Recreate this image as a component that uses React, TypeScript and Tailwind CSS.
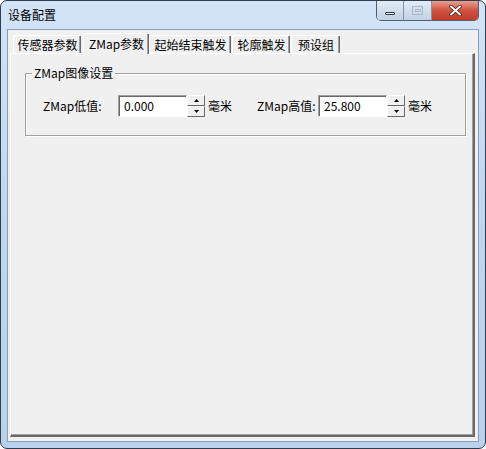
import type { ReactNode } from 'react';

const font = { fontFamily: '"Noto Sans CJK SC", "Microsoft YaHei", sans-serif' };

function Tab({ label, width, selected }: { label: string; width: string; selected?: boolean }) {
    if (selected) {
        return (
            <div
                className={`${width} relative z-10 -mb-px h-[21px] rounded-t-[2px] border-l border-t border-white bg-[#f0f0f0] flex items-start justify-center pt-[2px]`}
            >
                <div className="absolute right-0 top-0 bottom-0 w-[2px] border-r border-[#696969] bg-[#a0a0a0]" />
                <span className="text-[12px] leading-[16px] text-black">{label}</span>
            </div>
        );
    }
    return (
        <div
            className={`${width} relative h-[18px] rounded-t-[2px] border-l border-t border-white bg-[#f0f0f0] flex items-start justify-center pt-[1px]`}
        >
            <div className="absolute right-0 top-0 bottom-0 w-[2px] border-r border-[#696969] bg-[#a0a0a0]" />
            <span className="text-[12px] leading-[16px] text-black">{label}</span>
        </div>
    );
}

function SpinArrow({ up }: { up?: boolean }) {
    return (
        <div className="h-[11px] w-[18px] border-t border-l border-white border-r border-b border-r-[#696969] border-b-[#696969] bg-[#f0f0f0] flex items-center justify-center">
            <svg width="5" height="3" viewBox="0 0 5 3">
                {up ? <path d="M2.5 0 L5 3 L0 3 Z" fill="#000" /> : <path d="M0 0 L5 0 L2.5 3 Z" fill="#000" />}
            </svg>
        </div>
    );
}

function SpinField({ value }: { value: string }) {
    return (
        <div className="flex items-center">
            <div className="h-[22px] w-[69px] border-t border-l border-[#a0a0a0] border-b border-r border-b-white border-r-white">
                <div className="h-full w-full border-t border-l border-[#696969] bg-white pl-[4px] text-[12px] leading-[18px] text-black">
                    {value}
                </div>
            </div>
            <div className="flex flex-col">
                <SpinArrow up />
                <SpinArrow />
            </div>
            <span className="ml-[3px] text-[12px] text-black">毫米</span>
        </div>
    );
}

function CaptionButton({ children, className }: { children: ReactNode; className: string }) {
    return (
        <div className={`h-[20px] flex items-center justify-center border-b border-[#4f5f74] ${className}`}>
            {children}
        </div>
    );
}

export default function App() {
    return (
        <div className="w-[486px] h-[449px] bg-white" style={font}>
            <div className="w-[486px] h-[449px] rounded-[7px] border border-[#2f3d4e] bg-gradient-to-b from-[#d3e4f7] via-[#bfd6ee] to-[#b9d1ea] flex flex-col">
                {/* Title bar */}
                <div className="h-[28px] flex items-start">
                    <span className="ml-[7px] mt-[5px] text-[12px] leading-[18px] text-black">设备配置</span>
                    <div className="ml-auto mr-[6px] flex overflow-hidden rounded-b-[5px] border-x border-[#4f5f74]">
                        <CaptionButton className="w-[27px] bg-gradient-to-b from-[#e4ecf6] to-[#c2d2e5] border-r border-r-[#7f93ad]">
                            <div className="mt-[5px] h-[3px] w-[10px] rounded-[1px] border border-[#2a3440] bg-white" />
                        </CaptionButton>
                        <CaptionButton className="w-[28px] bg-gradient-to-b from-[#e4ecf6] to-[#c2d2e5] border-r border-r-[#7f93ad]">
                            <div className="h-[9px] w-[11px] border border-[#a9b6c6] flex items-center justify-center">
                                <div className="h-[3px] w-[6px] border border-[#a9b6c6]" />
                            </div>
                        </CaptionButton>
                        <CaptionButton className="w-[46px] bg-gradient-to-b from-[#e8a090] via-[#d0523f] to-[#c23a2a]">
                            <svg width="13" height="11" viewBox="0 0 13 11">
                                <path d="M2 1.5 L11 9.5 M11 1.5 L2 9.5" stroke="#3a1a14" strokeWidth="3.4" strokeLinecap="round" />
                                <path d="M2 1.5 L11 9.5 M11 1.5 L2 9.5" stroke="#fff" strokeWidth="2" strokeLinecap="round" />
                            </svg>
                        </CaptionButton>
                    </div>
                </div>

                {/* Client area */}
                <div className="mx-[6px] mb-[6px] flex-1 border border-[#8a9eb6] bg-[#f0f0f0] flex flex-col px-[2px] pt-[2px] pb-[4px]">
                    {/* Tab strip */}
                    <div className="flex items-end pl-[3px] h-[21px]">
                        <Tab label="传感器参数" width="w-[68px]" />
                        <div className="w-[2px]" />
                        <Tab label="ZMap参数" width="w-[66px]" selected />
                        <Tab label="起始结束触发" width="w-[82px]" />
                        <div className="w-[1px]" />
                        <Tab label="轮廓触发" width="w-[58px]" />
                        <div className="w-[1px]" />
                        <Tab label="预设组" width="w-[49px]" />
                    </div>

                    {/* Tab panel */}
                    <div className="flex-1 mr-[1px] border-t border-l border-white border-r-2 border-b-2 border-r-[#696969] border-b-[#696969]">
                        <div className="h-full border-r border-b border-[#a0a0a0] pt-[12px] pl-[14px] pr-[6px]">
                            {/* Group box */}
                            <fieldset className="h-[70px] border border-[#a0a0a0] shadow-[inset_1px_1px_0_#fff,1px_1px_0_#fff] px-0 pb-0 pt-0 m-0">
                                <legend className="ml-[6px] px-[2px] text-[12px] leading-[14px] text-black">
                                    ZMap图像设置
                                </legend>
                                <div className="flex items-center pl-[17px] pt-[15px]">
                                    <span className="w-[75px] text-[12px] text-black">ZMap低值:</span>
                                    <SpinField value="0.000" />
                                    <span className="ml-[25px] w-[61px] text-[12px] text-black">ZMap高值:</span>
                                    <SpinField value="25.800" />
                                </div>
                            </fieldset>
                        </div>
                    </div>
                </div>
            </div>
        </div>
    );
}
